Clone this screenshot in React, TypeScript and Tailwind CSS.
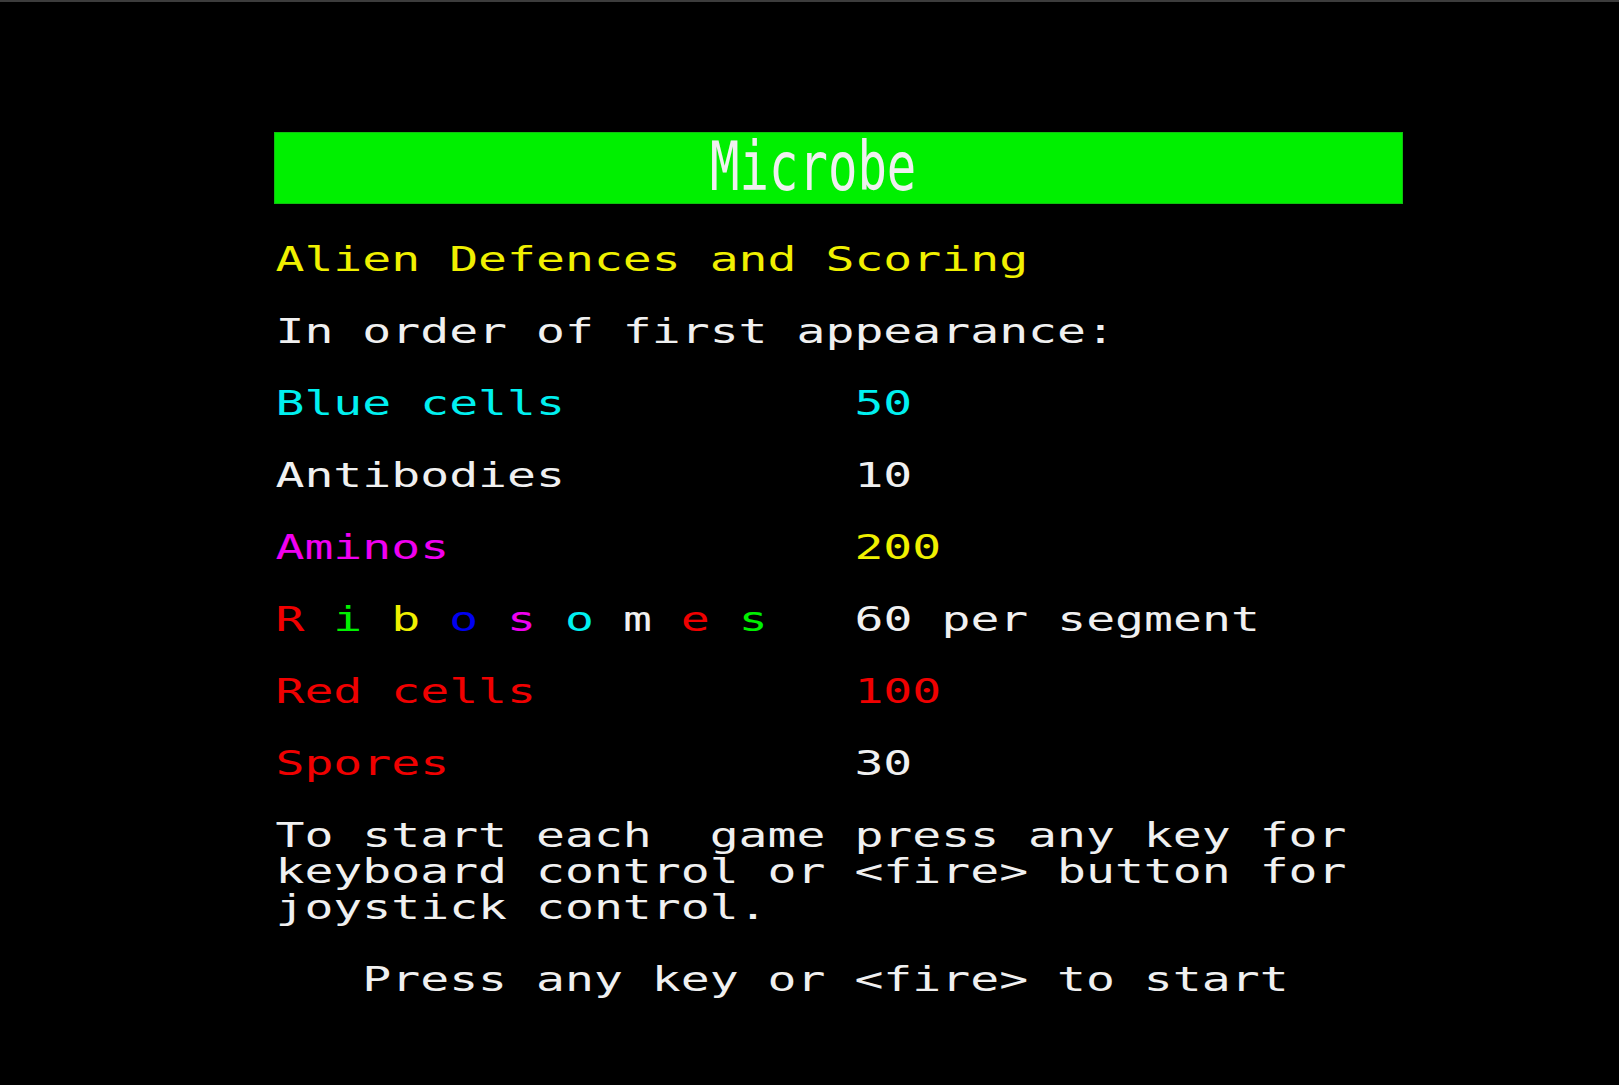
const Y = "text-[#f0f000]";
const W = "text-[#f0f0f0]";
const C = "text-[#00f0f0]";
const M = "text-[#f000f0]";
const R = "text-[#f00000]";
const G = "text-[#00f000]";
const B = "text-[#0000f0]";

type Seg = { t: string; c: string };

const rows: (Seg[] | null)[] = [
  [{ t: "Alien Defences and Scoring", c: Y }],
  null,
  [{ t: "In order of first appearance:", c: W }],
  null,
  [
    { t: "Blue cells          50", c: C },
  ],
  null,
  [{ t: "Antibodies          10", c: W }],
  null,
  [
    { t: "Aminos              ", c: M },
    { t: "200", c: Y },
  ],
  null,
  [
    { t: "R ", c: R },
    { t: "i ", c: G },
    { t: "b ", c: Y },
    { t: "o ", c: B },
    { t: "s ", c: M },
    { t: "o ", c: C },
    { t: "m ", c: W },
    { t: "e ", c: R },
    { t: "s   ", c: G },
    { t: "60 per segment", c: W },
  ],
  null,
  [{ t: "Red cells           100", c: R }],
  null,
  [
    { t: "Spores              ", c: R },
    { t: "30", c: W },
  ],
  null,
  [{ t: "To start each  game press any key for", c: W }],
  [{ t: "keyboard control or <fire> button for", c: W }],
  [{ t: "joystick control.", c: W }],
  null,
  [{ t: "   Press any key or <fire> to start", c: W }],
];

function Row({ segs }: { segs: Seg[] | null }) {
  return (
    <div className="pl-[1px] h-[36px] leading-[36px] text-[33px] whitespace-pre origin-left scale-x-[1.457]">
      {segs ? segs.map((s, i) => (
        <span key={i} className={s.c}>
          {s.t}
        </span>
      )) : "\u00a0"}
    </div>
  );
}

export default function App() {
  return (
    <div className="w-full h-screen bg-black overflow-hidden" style={{ fontFamily: '"DejaVu Sans Mono", "Liberation Mono", monospace' }}>
      <div className="h-[2px] bg-[#3c3c3c]" />
      <div className="pt-[130px] pl-[274px]">
        {/* double height title bar */}
        <div className="w-[1129px] h-[72px] bg-[#00f000] border border-[#10c010] pl-[435px]">
          <div className="h-[70px] leading-[68px] text-[68px] whitespace-pre text-[#f0f0f0] origin-left scale-x-[0.72]">
            Microbe
          </div>
        </div>
        <div className="h-[38px]" />
        {rows.map((r, i) => (
          <Row key={i} segs={r} />
        ))}
      </div>
    </div>
  );
}
